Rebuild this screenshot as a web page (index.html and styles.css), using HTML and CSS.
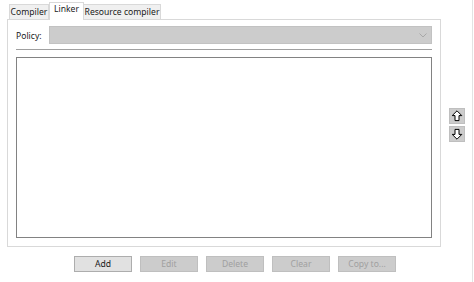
FILE: index.html
```html
<!DOCTYPE html>
<html>
<head>
<meta charset="utf-8">
<link rel="stylesheet" href="styles.css">
</head>
<body>
<div class="root">
  <div class="main">
    <div class="tabs">
      <div class="tab t1">Compiler</div>
      <div class="tab sel t2">Linker</div>
      <div class="tab t3">Resource compiler</div>
    </div>
    <div class="panel">
      <div class="policy">
        <span class="lbl">Policy:</span>
        <div class="combo">
          <svg class="chev" width="8" height="5" viewBox="0 0 8 5"><path d="M0.5 0.5 L4 4 L7.5 0.5" fill="none" stroke="#a8a8a8" stroke-width="1"/></svg>
        </div>
      </div>
      <div class="sep"></div>
      <div class="list"></div>
    </div>
    <div class="buttons">
      <div class="btn">Add</div>
      <div class="btn dis">Edit</div>
      <div class="btn dis">Delete</div>
      <div class="btn dis">Clear</div>
      <div class="btn dis">Copy to...</div>
    </div>
  </div>
  <div class="side">
    <div class="arrow">
      <svg width="12" height="12" viewBox="0 0 12 12"><path d="M6 0.8 L10.8 5.6 L8 5.6 L8 10.6 L4 10.6 L4 5.6 L1.2 5.6 Z" fill="#fff" stroke="#000" stroke-width="1" stroke-linejoin="miter"/></svg>
    </div>
    <div class="arrow">
      <svg width="12" height="12" viewBox="0 0 12 12"><path d="M6 11.2 L10.8 6.4 L8 6.4 L8 1.4 L4 1.4 L4 6.4 L1.2 6.4 Z" fill="#fff" stroke="#000" stroke-width="1" stroke-linejoin="miter"/></svg>
    </div>
  </div>
  <div class="vline"></div>
</div>
</body>
</html>
```
FILE: styles.css
```css
html, body {
  margin: 0;
  padding: 0;
  background: #ffffff;
}
body {
  font-family: "Noto Sans", "DejaVu Sans", sans-serif;
  font-size: 8.6px;
  color: #1a1a1a;
  width: 474px;
  height: 282px;
  overflow: hidden;
}
.root {
  display: flex;
  height: 282px;
}
.main {
  display: flex;
  flex-direction: column;
  padding-left: 7px;
  width: 434px;
}
.tabs {
  display: flex;
  align-items: flex-end;
  padding-left: 2px;
  height: 20px;
  position: relative;
  z-index: 1;
}
.tab {
  height: 15px;
  line-height: 14px;
  border: 1px solid #d9d9d9;
  border-bottom: none;
  background: #f0f0f0;
  box-sizing: border-box;
  margin-bottom: 1px;
  text-align: center;
}
.t1 { width: 40px; }
.t2 { width: 35px; }
.t3 { width: 77px; }
.tab + .tab { border-left: none; }
.tab.sel {
  height: 18px;
  background: #fff;
  border-left: 1px solid #d9d9d9;
  border-right: 1px solid #d9d9d9;
  margin-bottom: 0;
  line-height: 13px;
}
.tab.sel + .tab { border-left: none; }
.panel {
  border: 1px solid #d9d9d9;
  margin-top: -1px;
  height: 228px;
  box-sizing: border-box;
  padding: 6px 8px 8px 8px;
  display: flex;
  flex-direction: column;
  background: #fff;
}
.policy {
  display: flex;
  align-items: center;
  height: 18px;
}
.lbl {
  width: 33px;
  padding-top: 1px;
}
.combo {
  flex: 1;
  height: 18px;
  background: #cccccc;
  border: 1px solid #c2c2c2;
  box-sizing: border-box;
  display: flex;
  align-items: center;
  justify-content: flex-end;
  padding-right: 4px;
}
.sep {
  margin-top: 5px;
  height: 1px;
  background: #a0a0a0;
  border-bottom: 1px solid #ffffff;
}
.list {
  margin-top: 6px;
  flex: 1;
  border: 1px solid #828282;
  background: #fff;
}
.buttons {
  display: flex;
  gap: 8px;
  padding-left: 67px;
  margin-top: 9px;
}
.btn {
  width: 58px;
  height: 16px;
  box-sizing: border-box;
  border: 1px solid #adadad;
  background: #e1e1e1;
  text-align: center;
  line-height: 14px;
}
.btn.dis {
  background: #cccccc;
  border-color: #bfbfbf;
  color: #a0a0a0;
}
.side {
  width: 31px;
  display: flex;
  flex-direction: column;
  align-items: center;
  padding-top: 108px;
  gap: 2px;
}
.arrow {
  width: 16px;
  height: 16px;
  background: #cccccc;
  border: 1px solid #bfbfbf;
  box-sizing: border-box;
  display: flex;
  align-items: center;
  justify-content: center;
}
.vline {
  width: 1px;
  background: #e3e3e3;
}
```
